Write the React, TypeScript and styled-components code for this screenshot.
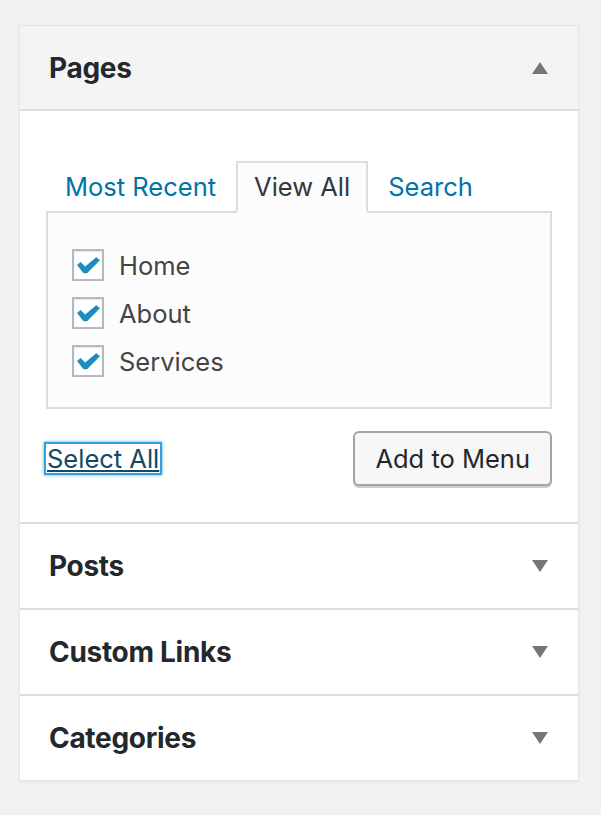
import styled, { createGlobalStyle } from "styled-components"

const GlobalStyle = createGlobalStyle`
  body {
    margin: 0;
    background: #f1f1f1;
    font-family: Inter, "Liberation Sans", sans-serif;
  }
`

const Page = styled.div`
  padding: 25px 22px 34px 19px;
`

const Panel = styled.div`
  width: 560px;
  border: 1px solid #e5e5e5;
  box-sizing: border-box;
  background: #fff;
  box-shadow: 0 1px 2px rgba(0, 0, 0, 0.05);
`

const Section = styled.div`
  & + & {
    border-top: 2px solid #dddddd;
  }
`

const SectionHeader = styled.div<{ open?: boolean }>`
  display: flex;
  align-items: center;
  justify-content: space-between;
  height: ${p => (p.open ? 83 : 84)}px;
  padding: 0 30px 0 29px;
  background: ${p => (p.open ? "#f4f4f4" : "#ffffff")};
  border-bottom: ${p => (p.open ? "2px solid #dddddd" : "none")};
`

const Title = styled.h3`
  margin: 0;
  font-size: 28px;
  font-weight: 700;
  color: #23282d;
  letter-spacing: -0.3px;
`

const Arrow = styled.span<{ up?: boolean }>`
  width: 0;
  height: 0;
  border-left: 8px solid transparent;
  border-right: 8px solid transparent;
  ${p =>
    p.up
      ? "border-bottom: 12px solid #72777c;"
      : "border-top: 12px solid #72777c;"}
`

const Body = styled.div`
  padding: 50px 26px 36px;
`

const Tabs = styled.div`
  display: flex;
  gap: 2px;
  margin-bottom: -2px;
`

const Tab = styled.div<{ active?: boolean }>`
  position: relative;
  z-index: 1;
  height: 46px;
  display: flex;
  align-items: center;
  padding: 0 16px 2px;
  font-size: 25.5px;
  color: ${p => (p.active ? "#32373c" : "#0073aa")};
  border: 2px solid ${p => (p.active ? "#dddddd" : "transparent")};
  border-bottom: 2px solid ${p => (p.active ? "#fcfcfc" : "transparent")};
  background: ${p => (p.active ? "#fcfcfc" : "transparent")};
  &:first-child {
    padding-left: 17px;
  }
`

const List = styled.div`
  border: 2px solid #dddddd;
  background: #fcfcfc;
  padding: 28px 24px 22px;
`

const Row = styled.label`
  display: flex;
  align-items: center;
  gap: 15px;
  height: 48px;
  font-size: 25.5px;
  color: #444444;
`

const Box = styled.span`
  width: 32px;
  height: 32px;
  box-sizing: border-box;
  border: 2px solid #b4b9be;
  background: #ffffff;
  box-shadow: inset 0 1px 2px rgba(0, 0, 0, 0.1);
  display: flex;
  align-items: center;
  justify-content: center;
`

const Footer = styled.div`
  display: flex;
  justify-content: space-between;
  align-items: center;
  margin-top: 22px;
`

const SelectAll = styled.a`
  margin-left: -2px;
  padding: 0 1px;
  font-size: 25.5px;
  line-height: 29px;
  color: #124964;
  text-decoration: underline;
  border: 2px solid #34a0e0;
  box-shadow: 0 0 3px rgba(30, 140, 190, 0.8);
`

const Button = styled.button`
  height: 55px;
  padding: 0 20px;
  font-family: inherit;
  font-size: 25.5px;
  color: #23282d;
  background: #f7f7f7;
  border: 2px solid #a0a5aa;
  border-radius: 6px;
  box-shadow: 0 2px 0 #cccccc;
`

const Check = () => (
  <svg width="23" height="17" viewBox="0 0 22 16">
    <polygon points="0,7.6 3.4,4.6 7.8,9 18.4,0 22,3 9.6,15.4 6.2,15.4" fill="#1e8cbe" />
  </svg>
)

const pages = ["Home", "About", "Services"]
const closed = ["Posts", "Custom Links", "Categories"]

export default function App() {
  return (
    <Page>
      <GlobalStyle />
      <Panel>
        <Section>
          <SectionHeader open>
            <Title>Pages</Title>
            <Arrow up />
          </SectionHeader>
          <Body>
            <Tabs>
              <Tab>Most Recent</Tab>
              <Tab active>View All</Tab>
              <Tab>Search</Tab>
            </Tabs>
            <List>
              {pages.map(p => (
                <Row key={p}>
                  <Box>
                    <Check />
                  </Box>
                  {p}
                </Row>
              ))}
            </List>
            <Footer>
              <SelectAll href="#">Select All</SelectAll>
              <Button>Add to Menu</Button>
            </Footer>
          </Body>
        </Section>
        {closed.map(c => (
          <Section key={c}>
            <SectionHeader>
              <Title>{c}</Title>
              <Arrow />
            </SectionHeader>
          </Section>
        ))}
      </Panel>
    </Page>
  )
}
